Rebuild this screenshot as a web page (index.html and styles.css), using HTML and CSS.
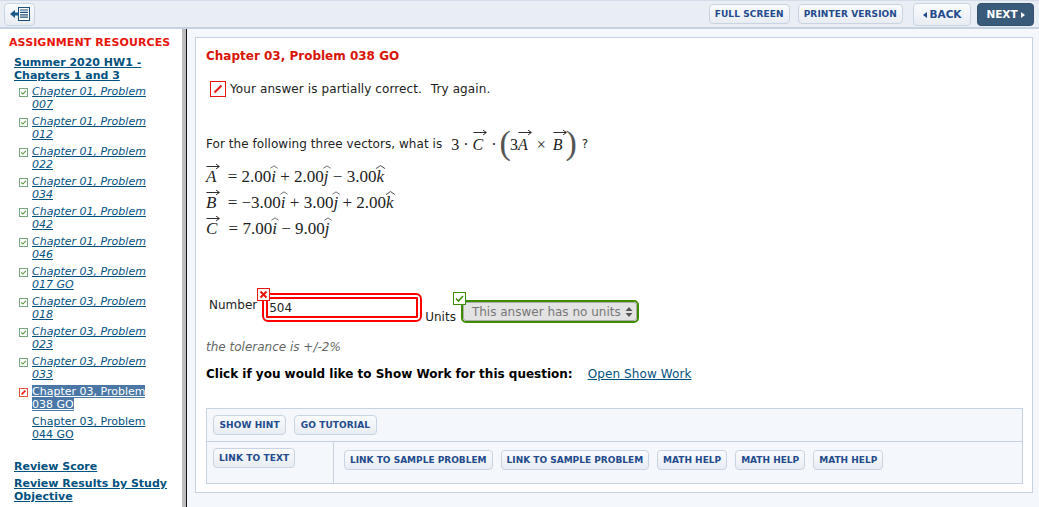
FILE: index.html
```html
<!DOCTYPE html>
<html lang="en">
<head>
  <meta charset="UTF-8">
  <title>Chapter 03, Problem 038 GO</title>
  <link rel="stylesheet" href="styles.css">
</head>
<body>
  <svg class="defs" width="0" height="0">
    <symbol id="arrow" viewBox="0 0 16 7"><path d="M0.5 3.5H15M11.5 0.8L15.3 3.5L11.5 6.2" fill="none" stroke="#111" stroke-width="1"/></symbol>
    <symbol id="hat" viewBox="0 0 10 4"><path d="M0.5 3.6L5 0.6L9.5 3.6" fill="none" stroke="#222" stroke-width="0.8"/></symbol>
    <symbol id="ok" viewBox="0 0 9 9"><rect x="0.5" y="0.5" width="8" height="8" fill="#fff" stroke="#74a57c"/><path d="M2.2 4.4L3.9 6L6.8 2.8" fill="none" stroke="#5a9a3a" stroke-width="1.1"/></symbol>
    <symbol id="part" viewBox="0 0 9 9"><rect x="0.5" y="0.5" width="8" height="8" fill="#fff" stroke="#e0563a"/><path d="M2.6 6.4L6.4 2.6" stroke="#e8150c" stroke-width="1.5"/></symbol>
  </svg>

  <header class="topbar">
    <button class="btn btn-large btn-icon" type="button" aria-label="Hide resources">
      <svg width="20" height="14" viewBox="0 0 20 14"><path d="M0 7L5 3V5.5H8V8.5H5V11Z" fill="#1d5a8c"/><rect x="8.5" y="0.5" width="11" height="13" fill="#fff" stroke="#1d4f7c"/><path d="M10 3H18M10 5.4H18M10 7.8H18M10 10.2H18" stroke="#1d4f7c" stroke-width="1.2"/></svg>
    </button>
    <div class="topbar-right">
      <button class="btn" type="button">FULL SCREEN</button>
      <button class="btn" type="button">PRINTER VERSION</button>
      <button class="btn btn-large btn-back" type="button"><span class="tri tri-left"></span>BACK</button>
      <button class="btn btn-large btn-next" type="button">NEXT<span class="tri tri-right"></span></button>
    </div>
  </header>

  <div class="main">
    <aside class="sidebar">
      <h3 class="side-title">ASSIGNMENT RESOURCES</h3>
      <a class="side-link assignment" href="#">Summer 2020 HW1 - Chapters 1 and 3</a>
      <ul class="problems">
        <li><svg class="mark"><use href="#ok"/></svg><span class="name"><a href="#">Chapter 01, Problem 007</a></span></li>
        <li><svg class="mark"><use href="#ok"/></svg><span class="name"><a href="#">Chapter 01, Problem 012</a></span></li>
        <li><svg class="mark"><use href="#ok"/></svg><span class="name"><a href="#">Chapter 01, Problem 022</a></span></li>
        <li><svg class="mark"><use href="#ok"/></svg><span class="name"><a href="#">Chapter 01, Problem 034</a></span></li>
        <li><svg class="mark"><use href="#ok"/></svg><span class="name"><a href="#">Chapter 01, Problem 042</a></span></li>
        <li><svg class="mark"><use href="#ok"/></svg><span class="name"><a href="#">Chapter 01, Problem 046</a></span></li>
        <li><svg class="mark"><use href="#ok"/></svg><span class="name"><a href="#">Chapter 03, Problem 017 GO</a></span></li>
        <li><svg class="mark"><use href="#ok"/></svg><span class="name"><a href="#">Chapter 03, Problem 018</a></span></li>
        <li><svg class="mark"><use href="#ok"/></svg><span class="name"><a href="#">Chapter 03, Problem 023</a></span></li>
        <li><svg class="mark"><use href="#ok"/></svg><span class="name"><a href="#">Chapter 03, Problem 033</a></span></li>
        <li class="current"><svg class="mark"><use href="#part"/></svg><span class="name"><a href="#">Chapter 03, Problem 038 GO</a></span></li>
        <li class="plain"><span class="mark"></span><span class="name"><a href="#">Chapter 03, Problem 044 GO</a></span></li>
      </ul>
      <a class="side-link review" href="#">Review Score</a>
      <a class="side-link review-2" href="#">Review Results by Study Objective</a>
    </aside>
    <div class="splitter"></div>

    <main class="content">
      <section class="panel">
        <h2 class="problem-title">Chapter 03, Problem 038 GO</h2>

        <p class="status">
          <span class="status-icon"><svg width="10" height="10" viewBox="0 0 10 10"><path d="M1.5 8.5L8.5 1.5" stroke="#e8150c" stroke-width="2"/></svg></span>
          <span>Your answer is partially correct.&nbsp; <span class="again">Try again.</span></span>
        </p>

        <p class="question">
          <span class="q-text">For the following three vectors, what is</span>
          <span class="math inline-math">3<span class="dot-a">·</span><span class="vec"><svg class="arrow"><use href="#arrow"/></svg><i>C</i></span><span class="dot-b">·</span><span class="paren paren-l">(</span>3<span class="vec"><svg class="arrow"><use href="#arrow"/></svg><i>A</i></span><span class="times">×</span><span class="vec"><svg class="arrow"><use href="#arrow"/></svg><i>B</i></span><span class="paren paren-r">)</span></span>
          <span class="q-end">?</span>
        </p>

        <div class="math equations">
          <div><span class="vec lhs"><svg class="arrow"><use href="#arrow"/></svg><i>A</i></span> = 2.00<span class="unit"><svg class="hat"><use href="#hat"/></svg><i>i</i></span> + 2.00<span class="unit"><svg class="hat"><use href="#hat"/></svg><i>j</i></span> − 3.00<span class="unit"><svg class="hat hat-k"><use href="#hat"/></svg><i>k</i></span></div>
          <div><span class="vec lhs"><svg class="arrow"><use href="#arrow"/></svg><i>B</i></span> = −3.00<span class="unit"><svg class="hat"><use href="#hat"/></svg><i>i</i></span> + 3.00<span class="unit"><svg class="hat"><use href="#hat"/></svg><i>j</i></span> + 2.00<span class="unit"><svg class="hat hat-k"><use href="#hat"/></svg><i>k</i></span></div>
          <div><span class="vec lhs"><svg class="arrow"><use href="#arrow"/></svg><i>C</i></span> = 7.00<span class="unit"><svg class="hat"><use href="#hat"/></svg><i>i</i></span> − 9.00<span class="unit"><svg class="hat"><use href="#hat"/></svg><i>j</i></span></div>
        </div>

        <div class="answer-row">
          <label class="lbl-number" for="number">Number</label>
          <span class="field field-wrong">
            <span class="badge badge-wrong"><svg width="9" height="9" viewBox="0 0 9 9"><path d="M1.5 1.5L7.5 7.5M7.5 1.5L1.5 7.5" stroke="#e8150c" stroke-width="2"/></svg></span>
            <input id="number" type="text" value="504">
          </span>
          <label class="lbl-units" for="units">Units</label>
          <span class="field field-right">
            <span class="badge badge-right"><svg width="9" height="9" viewBox="0 0 9 9"><path d="M1 4.5L3.5 7L8 2" fill="none" stroke="#3f8c00" stroke-width="1.6"/></svg></span>
            <span class="select" id="units">This answer has no units<svg width="8" height="12" viewBox="0 0 8 12"><path d="M4 1L7.5 5H0.5ZM4 11L0.5 7H7.5Z" fill="#555"/></svg></span>
          </span>
        </div>

        <p class="tolerance">the tolerance is +/-2%</p>
        <p class="show-work"><b>Click if you would like to Show Work for this question:</b><a href="#">Open Show Work</a></p>

        <div class="tools">
          <div class="tools-row">
            <button class="btn" type="button">SHOW HINT</button>
            <button class="btn" type="button">GO TUTORIAL</button>
          </div>
          <div class="tools-row2">
            <div class="tools-left"><button class="btn" type="button">LINK TO TEXT</button></div>
            <div class="tools-right">
              <button class="btn" type="button">LINK TO SAMPLE PROBLEM</button>
              <button class="btn" type="button">LINK TO SAMPLE PROBLEM</button>
              <button class="btn" type="button">MATH HELP</button>
              <button class="btn" type="button">MATH HELP</button>
              <button class="btn" type="button">MATH HELP</button>
            </div>
          </div>
        </div>
      </section>
    </main>
  </div>
</body>
</html>
```

FILE: styles.css
```css
* {
  box-sizing: border-box;
  margin: 0;
  padding: 0;
}

html, body {
  height: 507px;
  overflow: hidden;
}

body {
  background: #f4f7fb;
  color: #222;
  font-family: 'DejaVu Sans', Verdana, sans-serif;
  font-size: 12px;
}

.defs {
  display: block;
}

.topbar {
  height: 29px;
  background: #e9eef5;
  border-top: 1px solid #d3dce8;
  border-bottom: 2px solid #c6d2e1;
  display: flex;
  justify-content: space-between;
  align-items: center;
  padding: 0 5px 0 4px;
}

.topbar-right {
  display: flex;
  align-items: center;
}

.btn {
  height: 20px;
  padding: 0 5px;
  background: linear-gradient(#f9fbfd, #e8edf3);
  border: 1px solid #c9d4e2;
  border-radius: 4px;
  color: #234a8c;
  font-family: 'DejaVu Sans', Verdana, sans-serif;
  font-size: 9px;
  font-weight: 700;
  letter-spacing: 0.1px;
  white-space: nowrap;
  cursor: pointer;
}

.topbar-right .btn {
  margin-left: 8px;
}

.btn-large {
  height: 23px;
  font-size: 10.5px;
  letter-spacing: 0;
}

.btn-icon {
  width: 31px;
  padding: 0;
  display: flex;
  align-items: center;
  justify-content: center;
}

.topbar-right .btn-back {
  margin-left: 10px;
  width: 58px;
  padding: 0;
}

.topbar-right .btn-next {
  margin-left: 6px;
  width: 57px;
  padding: 0;
  background: #3a5a7a;
  border-color: #33506e;
  color: #fff;
}

.tri {
  display: inline-block;
  border-top: 3.5px solid transparent;
  border-bottom: 3.5px solid transparent;
}

.tri-left {
  border-right: 4px solid #234a8c;
  margin-right: 3px;
}

.tri-right {
  border-left: 4px solid #fff;
  margin-left: 3px;
}

.main {
  display: flex;
  height: 478px;
}

/* left list */
.sidebar {
  width: 182px;
  background: #fff;
  padding: 7px 0 0 9px;
  flex: none;
}

.side-title {
  color: #e8150c;
  font-size: 11px;
  line-height: 14px;
  font-weight: 700;
  letter-spacing: 0.1px;
  white-space: nowrap;
}

.side-link {
  display: block;
  color: #03517f;
  font-weight: 700;
  font-size: 11px;
  line-height: 13px;
}

.assignment {
  margin: 6px 0 0 5px;
  width: 135px;
}

.problems {
  list-style: none;
  margin: 3px 0 0 10px;
}

.problems li {
  display: flex;
  height: 26px;
  margin-bottom: 4px;
  font-size: 11px;
  line-height: 13px;
}

.name {
  display: block;
  width: 118px;
}

.problems a {
  color: #03517f;
  font-style: italic;
}

.problems .current a {
  font-style: normal;
  color: #fff;
  background: #4a77a6;
}

.problems .plain a {
  font-style: normal;
}

.mark {
  flex: none;
  width: 9px;
  height: 9px;
  margin: 3px 4px 0 0;
}

.review {
  margin: 19px 0 0 5px;
}

.review-2 {
  margin: 4px 0 0 5px;
  width: 160px;
}

.splitter {
  width: 5px;
  flex: none;
  background: #bdbdbd;
  border-right: 1px solid #111;
}

/* right side */
.content {
  flex: 1;
  padding: 8px 6px 14px 8px;
}

.panel {
  height: 456px;
  background: #fff;
  border: 1px solid #c6d2e1;
  padding: 11px 9px 0 10px;
}

.problem-title {
  color: #d81408;
  font-size: 12px;
  line-height: 14px;
  font-weight: 700;
}

.status {
  display: flex;
  align-items: center;
  gap: 4px;
  margin: 18px 0 0 4px;
  font-size: 12px;
  line-height: 16px;
  letter-spacing: 0.1px;
}

.again {
  margin-left: 1px;
}

.status-icon {
  width: 16px;
  height: 16px;
  border: 1px solid #e8150c;
  display: flex;
  align-items: center;
  justify-content: center;
}

.question {
  margin-top: 27px;
  display: flex;
  align-items: center;
  height: 40px;
}

.q-text {
  letter-spacing: 0.05px;
  margin-right: 9px;
}

.q-end {
  margin-left: 5px;
}

.math {
  font-family: 'Liberation Serif', 'Times New Roman', serif;
  color: #222;
  font-size: 17px;
}

.inline-math {
  font-size: 16px;
  white-space: nowrap;
  margin-bottom: 2px;
}

.dot-a {
  margin: 0 4px 0 4px;
}

.dot-b {
  margin: 0 3px 0 8px;
}

.times {
  margin: 0 7px 0 9px;
}

.paren {
  font-size: 34px;
  font-weight: 400;
  line-height: 20px;
  vertical-align: -4px;
  color: #555;
}

.paren-l {
  margin-right: -1px;
}

.paren-r {
  margin-left: 3px;
}

.vec, .unit {
  position: relative;
  display: inline-block;
}

.arrow {
  position: absolute;
  left: 0;
  top: -7px;
  width: 14px;
  height: 7px;
}

.equations .arrow {
  top: -1px;
}

.lhs {
  margin-right: 7px;
}

.hat {
  position: absolute;
  left: -1px;
  top: 1px;
  width: 8px;
  height: 4px;
}

.hat-k {
  left: -2px;
  width: 13px;
}

.equations {
  line-height: 26px;
}

.answer-row {
  display: flex;
  align-items: flex-start;
  margin-top: 51px;
  height: 36px;
}

.lbl-number {
  margin: 5px 5px 0 3px;
}

.field {
  position: relative;
  display: block;
}

.badge {
  position: absolute;
  width: 13px;
  height: 13px;
  background: #fff;
  display: flex;
  align-items: center;
  justify-content: center;
}

.badge-wrong {
  left: -7px;
  top: -7px;
  border: 1px solid #e8150c;
}

.badge-right {
  left: -10px;
  top: -10px;
  border: 1px solid #3f8c00;
}

.field-wrong {
  width: 160px;
  height: 29px;
  padding: 2px;
  border: 2px solid #f00;
  border-radius: 6px;
}

.field-wrong input {
  display: block;
  width: 100%;
  height: 21px;
  padding-left: 1px;
  background: #fff;
  border: 2px solid #f00;
  border-radius: 1px;
  outline: none;
  font-family: 'DejaVu Sans', Verdana, sans-serif;
  font-size: 12px;
  color: #222;
}

.lbl-units {
  margin: 17px 5px 0 3px;
}

.field-right {
  margin-top: 7px;
  border: 2px solid #3f8c00;
  border-radius: 5px;
}

.select {
  width: 174px;
  height: 19px;
  background: #e3e3e3;
  border: 1px solid #aaa;
  border-radius: 3px;
  color: #777;
  display: flex;
  align-items: center;
  justify-content: space-between;
  padding: 0 3px 0 8px;
}

.tolerance {
  margin-top: 11px;
  font-style: italic;
  color: #666;
  line-height: 15px;
}

.show-work {
  margin-top: 12px;
  line-height: 15px;
  color: #000;
}

.show-work a {
  margin-left: 15px;
  color: #03517f;
  letter-spacing: 0.1px;
}

.tools {
  margin-top: 26px;
  background: #f4f7fb;
  border: 1px solid #c6d2e1;
}

.tools-row {
  display: flex;
  gap: 8px;
  height: 33px;
  padding: 6px;
  border-bottom: 1px solid #c6d2e1;
}

.tools-row .btn {
  padding: 0 5.5px;
}

.tools-row2 {
  display: flex;
  height: 41px;
}

.tools-left {
  width: 127px;
  padding: 6px;
  border-right: 1px solid #c6d2e1;
}

.tools-right {
  display: flex;
  gap: 8px;
  padding: 8px 10px;
}

.tools-right .btn {
  letter-spacing: 0;
}
```
